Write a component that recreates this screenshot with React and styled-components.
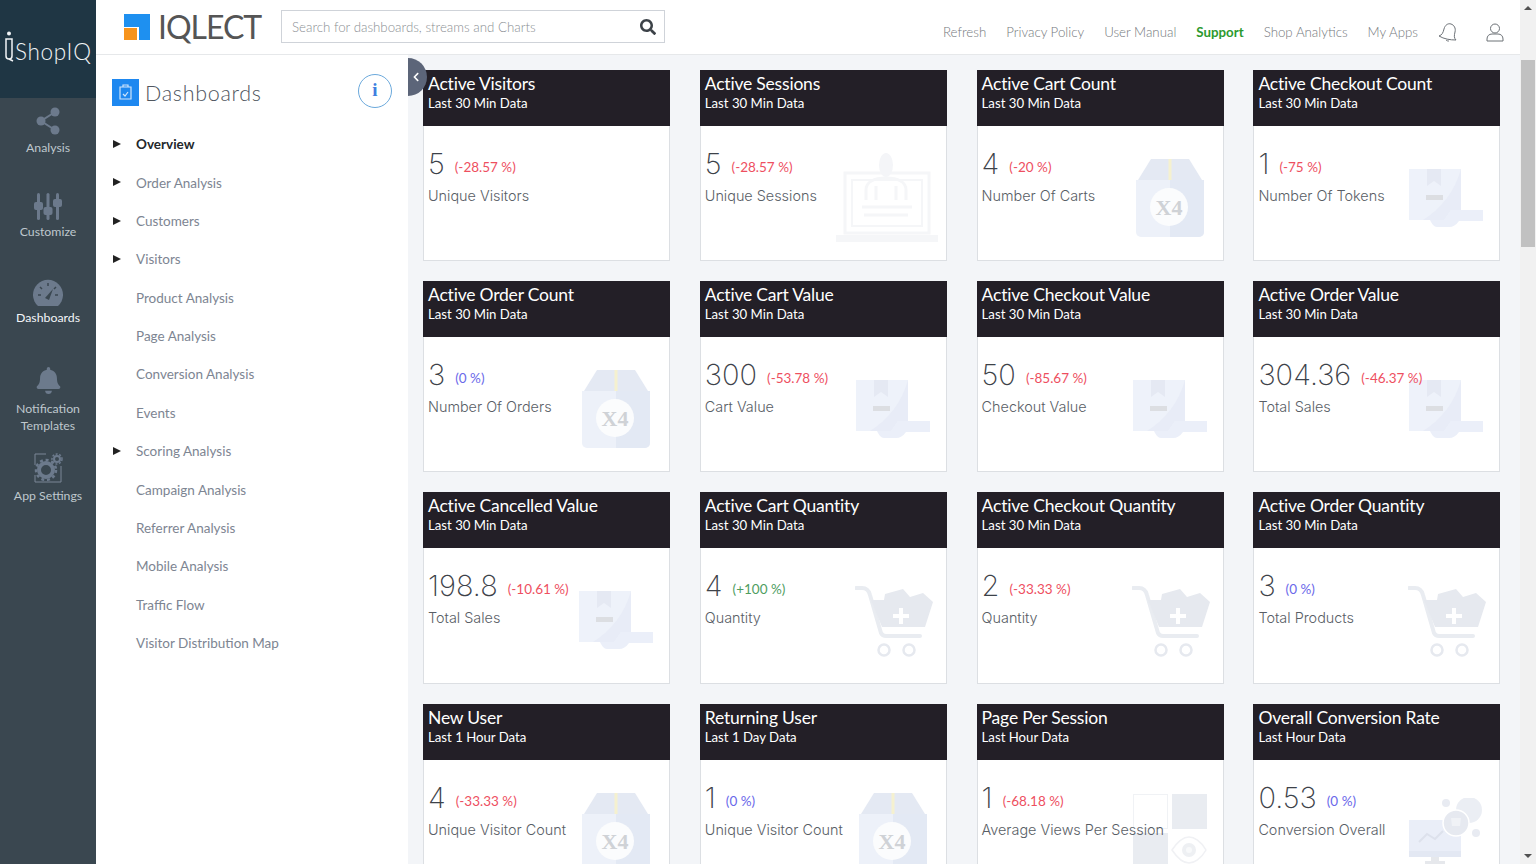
import React from 'react'
import styled, { createGlobalStyle } from 'styled-components'
import { FaSearch, FaChevronLeft, FaBell } from 'react-icons/fa'

const GlobalStyle = createGlobalStyle`
  html, body { margin: 0; height: 100%; overflow: hidden; }
  body { font-family: "Lato", "Liberation Sans", sans-serif; background: #fff; }
  * { box-sizing: border-box; }
`

const cards = [
  { title: 'Active Visitors', sub: 'Last 30 Min Data', value: '5', delta: '(-28.57 %)', label: 'Unique Visitors' },
  { title: 'Active Sessions', sub: 'Last 30 Min Data', value: '5', delta: '(-28.57 %)', label: 'Unique Sessions', icon: 'laptop' },
  { title: 'Active Cart Count', sub: 'Last 30 Min Data', value: '4', delta: '(-20 %)', label: 'Number Of Carts', icon: 'box' },
  { title: 'Active Checkout Count', sub: 'Last 30 Min Data', value: '1', delta: '(-75 %)', label: 'Number Of Tokens', icon: 'hand' },
  { title: 'Active Order Count', sub: 'Last 30 Min Data', value: '3', delta: '(0 %)', tone: 'flat', label: 'Number Of Orders', icon: 'box' },
  { title: 'Active Cart Value', sub: 'Last 30 Min Data', value: '300', delta: '(-53.78 %)', label: 'Cart Value', icon: 'hand' },
  { title: 'Active Checkout Value', sub: 'Last 30 Min Data', value: '50', delta: '(-85.67 %)', label: 'Checkout Value', icon: 'hand' },
  { title: 'Active Order Value', sub: 'Last 30 Min Data', value: '304.36', delta: '(-46.37 %)', label: 'Total Sales', icon: 'hand' },
  { title: 'Active Cancelled Value', sub: 'Last 30 Min Data', value: '198.8', delta: '(-10.61 %)', label: 'Total Sales', icon: 'hand' },
  { title: 'Active Cart Quantity', sub: 'Last 30 Min Data', value: '4', delta: '(+100 %)', tone: 'up', label: 'Quantity', icon: 'cart' },
  { title: 'Active Checkout Quantity', sub: 'Last 30 Min Data', value: '2', delta: '(-33.33 %)', label: 'Quantity', icon: 'cart' },
  { title: 'Active Order Quantity', sub: 'Last 30 Min Data', value: '3', delta: '(0 %)', tone: 'flat', label: 'Total Products', icon: 'cart' },
  { title: 'New User', sub: 'Last 1 Hour Data', value: '4', delta: '(-33.33 %)', label: 'Unique Visitor Count', icon: 'box' },
  { title: 'Returning User', sub: 'Last 1 Day Data', value: '1', delta: '(0 %)', tone: 'flat', label: 'Unique Visitor Count', icon: 'box' },
  { title: 'Page Per Session', sub: 'Last Hour Data', value: '1', delta: '(-68.18 %)', label: 'Average Views Per Session', icon: 'tiles' },
  { title: 'Overall Conversion Rate', sub: 'Last Hour Data', value: '0.53', delta: '(0 %)', tone: 'flat', label: 'Conversion Overall', icon: 'conversion' },
]

const menu = [
  { name: 'Overview', arrow: true, active: true },
  { name: 'Order Analysis', arrow: true },
  { name: 'Customers', arrow: true },
  { name: 'Visitors', arrow: true },
  { name: 'Product Analysis' },
  { name: 'Page Analysis' },
  { name: 'Conversion Analysis' },
  { name: 'Events' },
  { name: 'Scoring Analysis', arrow: true },
  { name: 'Campaign Analysis' },
  { name: 'Referrer Analysis' },
  { name: 'Mobile Analysis' },
  { name: 'Traffic Flow' },
  { name: 'Visitor Distribution Map' },
]

const links = ['Refresh', 'Privacy Policy', 'User Manual', 'Support', 'Shop Analytics', 'My Apps']

const Page = styled.div`
  display: flex;
  width: 1536px;
  height: 864px;
  overflow: hidden;
`
const Sidebar = styled.aside`
  width: 96px;
  flex: none;
  background: #3a4750;
  display: flex;
  flex-direction: column;
`
const Brand = styled.div`
  height: 98px;
  background: #1f3644;
  display: flex;
  align-items: flex-start;
  padding: 31px 0 0 3px;
  color: #f1f4f6;
  font-size: 22.5px;
  font-weight: 300;
  letter-spacing: 0.7px;
  line-height: 41px;
`
const SideItem = styled.div`
  height: ${p => p.$h}px;
  display: flex;
  flex-direction: column;
  align-items: center;
  color: ${p => (p.$active ? '#f4f6f8' : '#bfc8ce')};
  font-size: 12.3px;
  line-height: 17px;
  text-align: center;
  svg { flex: none; }
`
const SideIcon = styled.div`
  height: 28px;
  margin-bottom: ${p => p.$gap}px;
  color: #6c7a8c;
  display: flex;
  align-items: center;
  justify-content: center;
`
const SideItems = styled.nav`
  padding-top: 9px;
  display: flex;
  flex-direction: column;
`
const Main = styled.div`
  flex: 1;
  min-width: 0;
  display: flex;
  flex-direction: column;
`
const TopBar = styled.header`
  height: 55px;
  flex: none;
  background: #fff;
  border-bottom: 1px solid #e6e8ea;
  display: flex;
  align-items: flex-start;
  padding: 10px 0 0 28px;
`
const Logo = styled.div`
  display: flex;
  align-items: center;
  gap: 8px;
  width: 157px;
  height: 33px;
  color: #555;
  font-size: 32px;
  letter-spacing: -1px;
  font-weight: 400;
`
const SearchBox = styled.div`
  width: 384px;
  height: 33px;
  border: 1px solid #cfd3d9;
  display: flex;
  align-items: center;
  justify-content: space-between;
  padding: 0 8px 0 10px;
  color: #8b8f94;
  font-size: 13.3px;
  font-weight: 300;
  svg { color: #3c4248; }
`
const TopNav = styled.nav`
  margin-left: auto;
  display: flex;
  align-items: center;
  gap: 20px;
  height: 44px;
  padding-right: 16px;
`
const TopLink = styled.span`
  font-size: 13.3px;
  color: ${p => (p.$strong ? '#2c9a2e' : '#74787c')};
  font-weight: ${p => (p.$strong ? 700 : 300)};
`
const TopIcons = styled.div`
  display: flex;
  align-items: center;
  gap: 28px;
`
const Body = styled.div`
  flex: 1;
  min-height: 0;
  display: flex;
`
const Panel = styled.section`
  width: 312px;
  flex: none;
  background: #fff;
  padding: 19px 16px 0;
`
const PanelHead = styled.div`
  display: flex;
  align-items: center;
  height: 36px;
  margin-bottom: 15px;
`
const PanelBadge = styled.div`
  width: 27px;
  height: 27px;
  background: #1e88f0;
  display: flex;
  align-items: center;
  justify-content: center;
  margin-right: 6px;
`
const PanelTitle = styled.h1`
  margin: 0;
  padding-top: 2px;
  flex: 1;
  font-size: 21.5px;
  font-weight: 300;
  letter-spacing: 0.7px;
  color: #50565e;
`
const InfoButton = styled.div`
  width: 34px;
  height: 34px;
  margin-bottom: 2px;
  padding-bottom: 2px;
  border-radius: 50%;
  border: 1px solid #6ba9dc;
  display: flex;
  align-items: center;
  justify-content: center;
  color: #3f7fe0;
  font: 700 19px "Liberation Serif", serif;
`
const Menu = styled.ul`
  list-style: none;
  margin: 0;
  padding: 0;
`
const MenuRow = styled.li`
  height: 38.38px;
  display: flex;
  align-items: center;
  font-size: 13.5px;
  color: ${p => (p.$active ? '#23272b' : '#7d8592')};
  font-weight: ${p => (p.$active ? 700 : 400)};
  padding-left: 24px;
  position: relative;
  &::before {
    content: ${p => (p.$arrow ? '""' : 'none')};
    position: absolute;
    left: 1px;
    top: 15px;
    border-left: 8px solid #222;
    border-top: 4px solid transparent;
    border-bottom: 4px solid transparent;
  }
`
const Content = styled.main`
  flex: 1;
  min-width: 0;
  background: #f3f5f8;
  padding: 15px 0 0 15px;
  position: relative;
  overflow: hidden;
`
const Collapse = styled.div`
  position: absolute;
  left: 0;
  top: 3px;
  width: 19px;
  height: 38px;
  background: #5c6579;
  border-radius: 0 19px 19px 0;
  color: #fff;
  display: flex;
  align-items: center;
  justify-content: center;
  z-index: 2;
  padding-right: 4px;
`
const Grid = styled.div`
  display: grid;
  grid-template-columns: repeat(4, 247px);
  grid-auto-rows: 191.2px;
  column-gap: 29.8px;
  row-gap: 20px;
`
const Card = styled.article`
  position: relative;
  background: #fff;
  border: 1px solid #dcdfe3;
  border-top: 0;
`
const CardHead = styled.header`
  height: 56px;
  margin: 0 -1px;
  background: #231f27;
  color: #fff;
  padding: 3px 5px 0 5px;
`
const CardTitle = styled.div`
  font-size: 17.5px;
  line-height: 21px;
  font-weight: 400;
  letter-spacing: -0.2px;
`
const CardSub = styled.div`
  font-size: 13.2px;
  line-height: 18px;
`
const CardBody = styled.div`
  position: relative;
  z-index: 1;
  padding: 20px 0 0 4px;
`
const Stat = styled.div`
  display: flex;
  align-items: center;
  gap: 10px;
  height: 36px;
`
const StatValue = styled.span`
  font-family: "Inter", "Lato", sans-serif;
  font-size: 29px;
  font-weight: 200;
  color: #3d4249;
  line-height: 36px;
`
const toneColors = { down: '#ee4f5f', up: '#4f9d5f', flat: '#6a68ea' }
const StatDelta = styled.span`
  margin-top: 6px;
  font-size: 13.5px;
  font-weight: 400;
  color: ${p => toneColors[p.$tone]};
`
const StatLabel = styled.div`
  margin-top: 4px;
  font-family: "Inter", "Lato", sans-serif;
  font-size: 14.4px;
  font-weight: 300;
  color: #595e66;
  line-height: 20px;
`
const Watermark = styled.div`
  position: absolute;
  right: ${p => p.$right}px;
  top: ${p => p.$top}px;
  line-height: 0;
`
const ScrollTrack = styled.div`
  width: 16px;
  flex: none;
  background: #f1f1f1;
  display: flex;
  flex-direction: column;
  align-items: center;
  justify-content: space-between;
  position: relative;
  padding: 6px 0;
`
const ScrollThumb = styled.div`
  position: absolute;
  left: 1px;
  right: 1px;
  top: 60px;
  height: 187px;
  background: #c1c1c1;
`
const ScrollArrow = styled.i`
  display: block;
  border-left: 4px solid transparent;
  border-right: 4px solid transparent;
  ${p => (p.$down ? 'border-top: 4px solid #505050;' : 'border-bottom: 4px solid #505050;')}
`

const BoxArt = () => (
  <svg width="68" height="78" viewBox="0 0 68 78">
    <path d="M2 21 15 0h38l13 21z" fill="#e4e9f3" />
    <path d="M0 21h68v52a5 5 0 0 1-5 5H5a5 5 0 0 1-5-5z" fill="#edf1f9" />
    <path d="M34 21h34v52a5 5 0 0 1-5 5H34z" fill="#e3e9f4" />
    <rect x="32.5" y="0" width="3" height="21" fill="#f5f1cf" />
    <circle cx="33" cy="48" r="19" fill="#fbfcfd" />
    <text x="33" y="56" textAnchor="middle" fontFamily="Liberation Serif, serif" fontWeight="700" fontSize="22" fill="#cfd2d6">X4</text>
  </svg>
)
const HandArt = () => (
  <svg width="74" height="58" viewBox="0 0 74 58">
    <rect x="0" y="0" width="52" height="51" fill="#eef2fa" />
    <path d="M52 0v41H42l-7 10H14C32 40 46 22 52 0z" fill="#e8ecf7" />
    <path d="M18 0h14v17l-7-5-7 5z" fill="#e5e9f3" />
    <rect x="17" y="26" width="17" height="5" fill="#dcdee2" />
    <path d="M35 51l7-10h32v11H50c-3 4-6 6-10 6H28c-3 0-5-3-7-7z" fill="#ebeff9" />
  </svg>
)
const CartArt = () => (
  <svg width="78" height="73" viewBox="0 0 78 73">
    <path d="M1 4h6c5 0 7 3 8 7l11 38c1 2 3 3 5 3h34" fill="none" stroke="#e9ecf1" strokeWidth="4" strokeLinecap="round" />
    <path d="M16 16h13l1-6 18-5 7 8 13-4 10 9-8 25H27z" fill="#e6e9ef" />
    <path d="M44 24h4v6h6v4h-6v6h-4v-6h-6v-4h6z" fill="#fff" />
    <circle cx="29" cy="66" r="5.5" fill="none" stroke="#e6e9ef" strokeWidth="2.5" />
    <circle cx="54" cy="66" r="5.5" fill="none" stroke="#e6e9ef" strokeWidth="2.5" />
  </svg>
)
const LaptopArt = () => (
  <svg width="102" height="91" viewBox="0 0 102 91" fill="none" stroke="#f5f6f8" strokeWidth="3">
    <rect x="9" y="21" width="84" height="60" />
    <rect x="16" y="28" width="70" height="46" strokeWidth="2" />
    <ellipse cx="50" cy="13" rx="7" ry="12" fill="#f4f5f8" stroke="none" />
    <path d="M30 48V38c0-8 8-12 20-12s20 4 20 12v10M40 34v14M60 34v14M26 55h50M28 63h44" />
    <rect x="0" y="83" width="102" height="7" fill="#f5f6f8" stroke="none" />
  </svg>
)
const TilesArt = () => (
  <svg width="74" height="70" viewBox="0 0 74 70">
    <rect x="0.5" y="0.5" width="34" height="34" fill="#fff" stroke="#f0f2f5" />
    <rect x="39" y="0" width="35" height="35" fill="#e9ecf1" />
    <rect x="0" y="39" width="35" height="31" fill="#e9ecf1" />
    <path d="M39 56c6-9 12-13 17-13s12 4 17 13c-5 9-12 13-17 13s-11-4-17-13z" fill="#fff" stroke="#f0f1f4" strokeWidth="1.5" />
    <circle cx="56" cy="56" r="7" fill="#eef0f3" />
    <circle cx="56" cy="56" r="3" fill="#f8f9fa" />
  </svg>
)
const ConversionArt = () => (
  <svg width="74" height="68" viewBox="0 0 74 68">
    <rect x="0" y="22" width="52" height="37" fill="#eaeef8" />
    <rect x="0" y="53" width="52" height="6" fill="#e3e8f3" />
    <path d="M22 59h8v4h6v5H16v-5h6z" fill="#e6e8ec" />
    <path d="M10 44l8-8 8 5 8-8" fill="none" stroke="#dde1ec" strokeWidth="2" />
    <circle cx="60" cy="12" r="13" fill="#ebeef4" />
    <circle cx="47" cy="25" r="13" fill="#e6e9f0" stroke="#fff" strokeWidth="1.5" />
    <circle cx="37" cy="5" r="4" fill="#e8ebf2" />
    <circle cx="67" cy="35" r="4" fill="#e8ebf2" />
    <path d="M42 20h10l-1 8h-8z" fill="#f0f2f6" />
  </svg>
)

const watermarks = {
  box: { Art: BoxArt, right: 19, top: 89 },
  hand: { Art: HandArt, right: 16, top: 99 },
  cart: { Art: CartArt, right: 13, top: 92 },
  laptop: { Art: LaptopArt, right: 8, top: 82 },
  tiles: { Art: TilesArt, right: 16, top: 90 },
  conversion: { Art: ConversionArt, right: 16, top: 94 },
}

function StatCard({ title, sub, value, delta, tone = 'down', label, icon }) {
  const mark = watermarks[icon]
  return (
    <Card>
      <CardHead>
        <CardTitle>{title}</CardTitle>
        <CardSub>{sub}</CardSub>
      </CardHead>
      {mark && (
        <Watermark $right={mark.right} $top={mark.top}>
          <mark.Art />
        </Watermark>
      )}
      <CardBody>
        <Stat>
          <StatValue>{value}</StatValue>
          <StatDelta $tone={tone}>{delta}</StatDelta>
        </Stat>
        <StatLabel>{label}</StatLabel>
      </CardBody>
    </Card>
  )
}

const BrandPin = () => (
  <svg width="12" height="32" viewBox="0 0 12 32" fill="none" stroke="#f1f4f6" strokeWidth="1.5">
    <circle cx="6" cy="2.5" r="2" fill="#f1f4f6" stroke="none" />
    <path d="M3 8h6v17c0 2-1 3-3 3s-3-1-3-3zM6 28l4 2" />
  </svg>
)
const ShareNodes = () => (
  <svg width="24" height="28" viewBox="0 0 24 28" fill="#6c7a8c" stroke="#6c7a8c">
    <path d="M19 5 5 14l14 9" fill="none" strokeWidth="2" />
    <circle cx="19" cy="5" r="4.5" stroke="none" />
    <circle cx="5" cy="14" r="4.5" stroke="none" />
    <circle cx="19" cy="23" r="4.5" stroke="none" />
  </svg>
)
const Mixer = () => (
  <svg width="28" height="27" viewBox="0 0 28 27" fill="#6c7a8c">
    <rect x="3" y="0" width="3" height="27" rx="1.5" /><rect x="0" y="9" width="9" height="8" rx="2" />
    <rect x="12.5" y="0" width="3" height="27" rx="1.5" /><rect x="9.5" y="14" width="9" height="8" rx="2" />
    <rect x="22" y="0" width="3" height="27" rx="1.5" /><rect x="19" y="6" width="9" height="8" rx="2" />
  </svg>
)
const Gauge = () => (
  <svg width="30" height="28" viewBox="0 0 30 28">
    <path d="M5 27A15 15 0 1 1 25 27z" fill="#6c7a8c" />
    <path d="M12 19l8-9-4 11z" fill="#3a4750" />
    <path d="M5 16h3M15 4v3M7 8l2 2M23 8l-2 2M22 16h3" stroke="#3a4750" strokeWidth="1.5" />
  </svg>
)
const GearFrame = () => (
  <svg width="30" height="30" viewBox="0 0 30 30" fill="none">
    <path d="M13 1H2v11M2 22v7h26V13" stroke="#7a8796" strokeWidth="1" />
    <circle cx="13" cy="17" r="7" stroke="#6c7a8c" strokeWidth="4" />
    <circle cx="13" cy="17" r="10" stroke="#6c7a8c" strokeWidth="2.5" strokeDasharray="3 2.8" />
    <circle cx="24" cy="6" r="3" stroke="#6c7a8c" strokeWidth="2" />
    <circle cx="24" cy="6" r="5" stroke="#6c7a8c" strokeWidth="1.5" strokeDasharray="2 1.6" />
  </svg>
)
const BellLine = () => (
  <svg width="20" height="20" viewBox="0 0 20 20" fill="none" stroke="#6d7277" strokeWidth="1">
    <path d="M1 14c3-1 4-3 5-7s4-6 7-5 5 4 4 8-1 6 1 8c-6 0-12-1-17-4zM8 18c1 1 2 1 3 1" />
  </svg>
)
const UserLine = () => (
  <svg width="18" height="19" viewBox="0 0 18 19" fill="none" stroke="#6d7277" strokeWidth="1">
    <circle cx="9" cy="5.5" r="4.5" />
    <path d="M1 18v-2c0-3 2-5 5-5h6c3 0 5 2 5 5v2z" />
  </svg>
)
const LogoMark = () => (
  <svg width="26" height="26" viewBox="0 0 26 26">
    <rect width="26" height="26" fill="#1e90f0" />
    <rect x="0" y="13" width="15" height="13" fill="#fff" />
    <rect x="0" y="14" width="13" height="12" fill="#f7941d" />
  </svg>
)
const ClipDoc = () => (
  <svg width="17" height="17" viewBox="0 0 17 17" fill="none" stroke="#cfe4fb" strokeWidth="1.2">
    <path d="M3 3h11v12H3zM6 3V1h5v2M6 10l2 2 3-4" />
  </svg>
)

export default function App() {
  return (
    <Page>
      <GlobalStyle />
      <Sidebar>
        <Brand>
          <BrandPin />
          <span>ShopIQ</span>
        </Brand>
        <SideItems>
          <SideItem $h={85}>
            <SideIcon $gap={4}><ShareNodes /></SideIcon>
            Analysis
          </SideItem>
          <SideItem $h={87}>
            <SideIcon $gap={3}><Mixer /></SideIcon>
            Customize
          </SideItem>
          <SideItem $h={87} $active>
            <SideIcon $gap={2}><Gauge /></SideIcon>
            Dashboards
          </SideItem>
          <SideItem $h={88}>
            <SideIcon $gap={6}><FaBell size={27} /></SideIcon>
            Notification<br />Templates
          </SideItem>
          <SideItem $h={60}>
            <SideIcon $gap={5}><GearFrame /></SideIcon>
            App Settings
          </SideItem>
        </SideItems>
      </Sidebar>
      <Main>
        <TopBar>
          <Logo>
            <LogoMark />
            <span>IQLECT</span>
          </Logo>
          <SearchBox>
            <span>Search for dashboards, streams and Charts</span>
            <FaSearch size={16} />
          </SearchBox>
          <TopNav>
            {links.map(link => (
              <TopLink key={link} $strong={link === 'Support'}>{link}</TopLink>
            ))}
            <TopIcons>
              <BellLine />
              <UserLine />
            </TopIcons>
          </TopNav>
        </TopBar>
        <Body>
          <Panel>
            <PanelHead>
              <PanelBadge><ClipDoc /></PanelBadge>
              <PanelTitle>Dashboards</PanelTitle>
              <InfoButton>i</InfoButton>
            </PanelHead>
            <Menu>
              {menu.map(item => (
                <MenuRow key={item.name} $arrow={item.arrow} $active={item.active}>{item.name}</MenuRow>
              ))}
            </Menu>
          </Panel>
          <Content>
            <Collapse><FaChevronLeft size={10} /></Collapse>
            <Grid>
              {cards.map(card => (
                <StatCard key={card.title} {...card} />
              ))}
            </Grid>
          </Content>
        </Body>
      </Main>
      <ScrollTrack>
        <ScrollArrow />
        <ScrollThumb />
        <ScrollArrow $down />
      </ScrollTrack>
    </Page>
  )
}
